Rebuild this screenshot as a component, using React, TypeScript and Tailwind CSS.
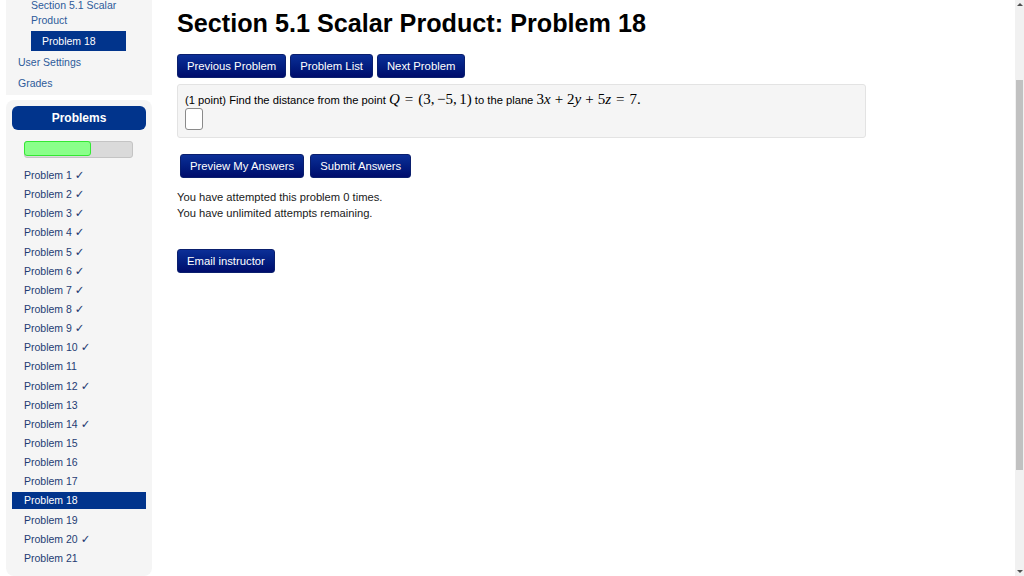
import React from "react";

const problems: { n: number; done: boolean }[] = [
  1, 2, 3, 4, 5, 6, 7, 8, 9, 10, 11, 12, 13, 14, 15, 16, 17, 18, 19, 20, 21,
].map((n) => ({ n, done: [1, 2, 3, 4, 5, 6, 7, 8, 9, 10, 12, 14, 20].includes(n) }));

function Btn({ children, className = "" }: { children: React.ReactNode; className?: string }) {
  return (
    <button
      className={
        "h-[24px] px-[9px] rounded-[3px] border border-[#0a1f6e] bg-linear-to-b from-[#0c2f97] to-[#000c6c] text-white text-[11.3px] leading-[22px] whitespace-nowrap " +
        className
      }
    >
      {children}
    </button>
  );
}

function M({ children }: { children: React.ReactNode }) {
  return <span className="italic">{children}</span>;
}
function Rel({ children }: { children: React.ReactNode }) {
  return <span className="mx-[5px]">{children}</span>;
}
function Bin({ children }: { children: React.ReactNode }) {
  return <span className="mx-[4px]">{children}</span>;
}
function Comma() {
  return <span className="mr-[2.5px]">,</span>;
}

const serif = { fontFamily: '"Liberation Serif", "DejaVu Serif", serif' };

export default function App() {
  return (
    <div
      className="w-[1024px] h-[576px] overflow-hidden flex bg-white text-black"
      style={{ fontFamily: '"Liberation Sans", Arial, sans-serif' }}
    >
      <div className="flex-1 flex min-w-0">
        {/* Sidebar */}
        <aside className="w-[146px] ml-[6px] flex flex-col gap-[5px] shrink-0">
          <div className="bg-[#f5f5f5] h-[95px] pl-[12px] text-[10.5px] text-[#2d5b9a]">
            <div className="pl-[13px] -mt-[2.5px]">
              <div className="leading-[15px]">Section 5.1 Scalar</div>
              <div className="leading-[15px]">Product</div>
              <div className="mt-[3.5px] h-[20px] leading-[20px] w-[95px] pl-[11px] bg-[#01348c] text-white">
                Problem 18
              </div>
            </div>
            <div className="h-[21px] leading-[21px] mt-[0.5px]">User Settings</div>
            <div className="h-[21px] leading-[21px]">Grades</div>
          </div>
          <div className="flex-1 bg-[#f5f5f5] rounded-[8px] pt-[6px] px-[6px]">
            <div className="h-[24px] rounded-[6px] bg-[#01348c] text-white font-bold text-[12px] leading-[24px] text-center">
              Problems
            </div>
            <div className="mt-[11px] ml-[12px] w-[109px] h-[17px] rounded-[3px] bg-[#dadada] border border-[#c4c4c4] flex">
              <div className="w-[67px] h-full rounded-[3px] bg-[#8aff8a] border-[1.5px] border-[#33e833] -m-[1px]" />
            </div>
            <div className="mt-[9px] flex flex-col gap-[2.15px]">
              {problems.map((p) => (
                <div
                  key={p.n}
                  className={
                    "h-[17px] leading-[17px] pl-[12px] text-[10.5px] " +
                    (p.n === 18 ? "bg-[#01348c] text-white" : "text-[#1f3c73]")
                  }
                >
                  Problem {p.n}
                  {p.done ? (
                    <span className="ml-[3px]" style={{ fontFamily: '"DejaVu Sans", sans-serif', fontSize: "11.5px" }}>
                      ✓
                    </span>
                  ) : null}
                </div>
              ))}
            </div>
          </div>
        </aside>

        {/* Main */}
        <main className="ml-[25px] w-[689px] flex flex-col items-start">
          <h1 className="pt-[8px] h-[38px] leading-[30px] text-[25.2px] font-bold whitespace-nowrap">
            Section 5.1 Scalar Product: Problem 18
          </h1>
          <div className="mt-[16px] flex gap-[4px]">
            <Btn>Previous Problem</Btn>
            <Btn>Problem List</Btn>
            <Btn>Next Problem</Btn>
          </div>
          <div className="mt-[6px] w-[689px] h-[54px] bg-[#f5f5f5] border border-[#e3e3e3] rounded-[3px] px-[7px] pt-[6px]">
            <div className="h-[17px] leading-[17px] text-[11.2px] whitespace-nowrap flex items-baseline">
              <span>(1 point) Find the distance from the point&nbsp;</span>
              <span className="text-[15px]" style={serif}>
                <M>Q</M>
                <Rel>=</Rel>(3<Comma />−5<Comma />1)
              </span>
              <span>&nbsp;to the plane&nbsp;</span>
              <span className="text-[15px]" style={serif}>
                3<M>x</M>
                <Bin>+</Bin>2<M>y</M>
                <Bin>+</Bin>5<M>z</M>
                <Rel>=</Rel>7.
              </span>
            </div>
            <div className="w-[18px] h-[22px] bg-white border border-[#8a8a8a] rounded-[3px]" />
          </div>
          <div className="mt-[16px] ml-[3px] flex gap-[6px]">
            <Btn>Preview My Answers</Btn>
            <Btn>Submit Answers</Btn>
          </div>
          <div className="mt-[11px] text-[11.2px] leading-[16px] text-[#1a1a1a]">
            <div>You have attempted this problem 0 times.</div>
            <div>You have unlimited attempts remaining.</div>
          </div>
          <div className="mt-[27px]">
            <Btn>Email instructor</Btn>
          </div>
        </main>
      </div>

      {/* Scrollbar */}
      <div className="w-[9px] h-full bg-[#f1f1f1] flex flex-col items-center shrink-0">
        <div className="h-[9px] flex items-center justify-center">
          <div className="w-0 h-0 border-l-[3px] border-r-[3px] border-b-[3px] border-l-transparent border-r-transparent border-b-[#505050]" />
        </div>
        <div className="h-[71px]" />
        <div className="w-[7px] h-[390px] bg-[#c1c1c1]" />
        <div className="flex-1" />
        <div className="h-[9px] flex items-center justify-center">
          <div className="w-0 h-0 border-l-[3px] border-r-[3px] border-t-[3px] border-l-transparent border-r-transparent border-t-[#505050]" />
        </div>
      </div>
    </div>
  );
}
